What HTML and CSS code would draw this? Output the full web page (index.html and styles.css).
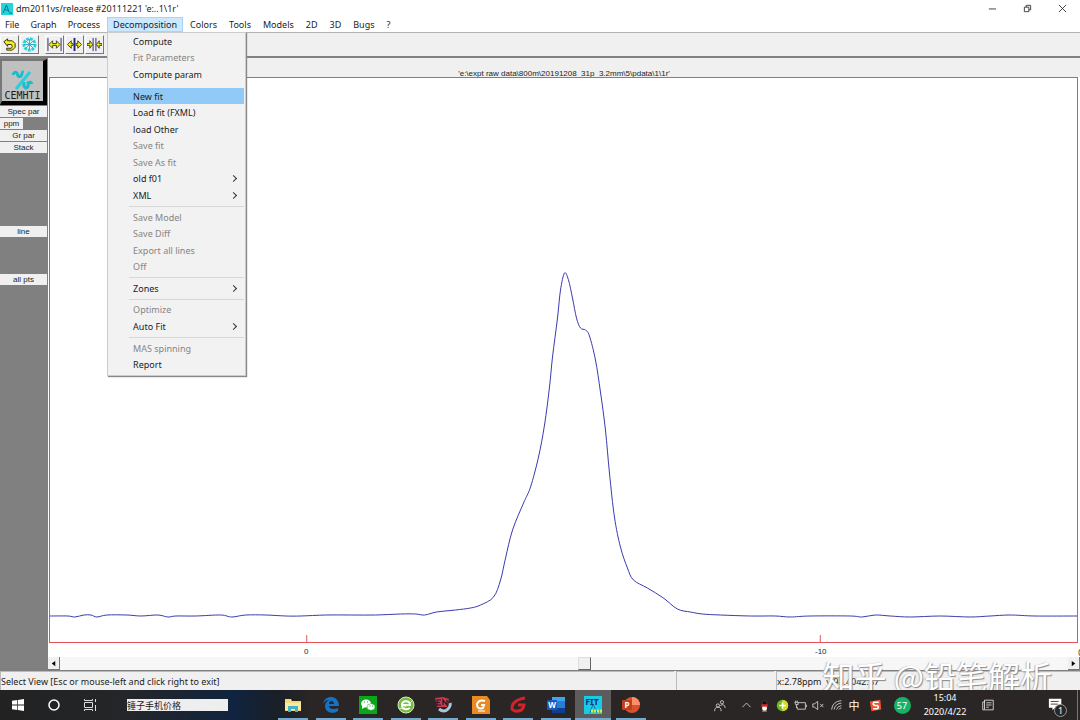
FILE: index.html
```html
<!DOCTYPE html>
<html lang="en">
<head>
    <meta charset="UTF-8">
    <meta name="viewport" content="width=device-width, initial-scale=1.0">
    <title>dm2011vs/release</title>
    <link rel="stylesheet" href="styles.css">
</head>
<body>

    <header class="titlebar">
        <svg class="app-icon" viewBox="0 0 12 12"><rect width="12" height="12" fill="#25d3dc"/><path d="M2 10L5.500 2L8 9M4 7h3M8 10h3" stroke="#126f83" fill="none"/></svg>
        <h1>dm2011vs/release #20111221 'e:..1\1r'</h1>
        <div class="window-buttons">
            <button aria-label="Minimize"><svg viewBox="0 0 10 10"><path d="M1 5.500h8"/></svg></button>
            <button aria-label="Restore"><svg viewBox="0 0 10 10"><path d="M1.500 3.500h5v5h-5zM3.500 3.500v-2h5v5h-2"/></svg></button>
            <button aria-label="Close"><svg viewBox="0 0 10 10"><path d="M1 1l8 8M9 1L1 9"/></svg></button>
        </div>
    </header>

    <nav class="menubar">
        <button>File</button>
        <button>Graph</button>
        <button>Process</button>
        <div class="menu-holder">
            <button class="open">Decomposition</button>
            <div class="menu">
                <button>Compute</button>
                <button disabled>Fit Parameters</button>
                <button>Compute param</button>
                <hr class="blank">
                <button class="selected">New fit</button>
                <button>Load fit (FXML)</button>
                <button>load Other</button>
                <button disabled>Save fit</button>
                <button disabled>Save As fit</button>
                <button class="sub">old f01</button>
                <button class="sub">XML</button>
                <hr>
                <button disabled>Save Model</button>
                <button disabled>Save Diff</button>
                <button disabled>Export all lines</button>
                <button disabled>Off</button>
                <hr>
                <button class="sub">Zones</button>
                <hr>
                <button disabled>Optimize</button>
                <button class="sub">Auto Fit</button>
                <hr>
                <button disabled>MAS spinning</button>
                <button>Report</button>
            </div>
        </div>
        <button>Colors</button>
        <button>Tools</button>
        <button>Models</button>
        <button>2D</button>
        <button>3D</button>
        <button>Bugs</button>
        <button>?</button>
    </nav>

    <div class="toolbar">
        <button aria-label="Undo"><svg viewBox="0 0 16 16"><path d="M2 5l4-3v2h5l3 3v4l-3 3H5v-2h5l1-2-1-2H6v2z" fill="#f2ee20" stroke="#332f00"/></svg></button>
        <button aria-label="Refresh"><svg viewBox="0 0 16 16"><circle cx="8" cy="8" r="6" fill="none" stroke="#27cfe0" stroke-width="3" stroke-dasharray="3 1"/><path d="M8 2v12M2 8h12M4 4l8 8M12 4l-8 8" stroke="#1fb4cc"/></svg></button>
        <span class="space"></span>
        <button aria-label="Full width"><svg viewBox="0 0 16 16"><path d="M1 1v14M15 1v14" stroke="#22227a"/><path d="M2 8l4-4v3h4V4l4 4-4 4V9H6v3z" fill="#f2ee20" stroke="#44420a"/></svg></button>
        <button aria-label="Expand"><svg viewBox="0 0 16 16"><path d="M0.500 8l4-4v3h2v2h-2v3zM15.500 8l-4-4v3h-2v2h2v3z" fill="#f2ee20" stroke="#44420a"/><path d="M8 1v14" stroke="#22227a" stroke-width="2"/></svg></button>
        <button aria-label="Shrink"><svg viewBox="0 0 16 16"><path d="M6 8l-3-4v3H0v2h3v3zM10 8l3-4v3h3v2h-3v3z" fill="#f2ee20" stroke="#44420a"/><path d="M6.500 1v14M9.500 1v14" stroke="#22227a"/></svg></button>
    </div>

    <main class="work">
        <aside class="sidebar">
            <button class="logo">
                <svg viewBox="0 0 24 20"><path d="M2 5q1-4 4-2q1 5 4 3q2-4 1-5M13 12q-1 5 2 6q3-1 2-5q3-2 4 1" fill="none" stroke="#1bbccb" stroke-width="3"/><path d="M19 2L5 19" stroke="#25cfdc" stroke-width="3"/></svg>
                <span>CEMHTI</span>
            </button>
            <button>Spec par</button>
            <button class="unit">ppm</button>
            <button>Gr par</button>
            <button>Stack</button>
            <button class="line">line</button>
            <button class="points">all pts</button>
        </aside>

        <section class="plot">
            <h2>'e:\expt raw data\800m\20191208_31p_3.2mm\5\pdata\1\1r'</h2>
            <div class="frame">
                <svg viewBox="49 78 1028 564" preserveAspectRatio="none">
                    <path class="tick" d="M306 635v8M820 635v8"/>
                    <path class="curve" id="curve"/>
                </svg>
            </div>
            <div class="axis"><span>0</span><span>-10</span><span>(</span></div>
            <div class="scroller">
                <button aria-label="Scroll left"><svg viewBox="0 0 8 8"><path d="M6 1v6L2 4z"/></svg></button>
                <input type="range" min="0" max="1000" value="521" aria-label="Scroll">
                <button aria-label="Scroll right"><svg viewBox="0 0 8 8"><path d="M2 1v6l4-3z"/></svg></button>
            </div>
        </section>
    </main>

    <footer class="status">
        <span class="message">Select View [Esc or mouse-left and click right to exit]</span>
        <span class="empty"></span>
        <span class="coords">x:2.78ppm &nbsp;y:98.4042.37</span>
        <div class="watermark">知乎 @铅笔解析</div>
    </footer>

    <div class="taskbar">
        <button class="sys" aria-label="Start"><svg viewBox="0 0 16 16"><path d="M2 3.700L7.300 3v4.600H2zM8 2.900L14 2v5.600H8zM2 8.400h5.300V13L2 12.300zM8 8.400h6V14l-6-.9z" fill="#fff"/></svg></button>
        <button class="sys" aria-label="Cortana"><svg viewBox="0 0 16 16"><circle cx="8" cy="8" r="5" fill="none" stroke="#fff" stroke-width="1.500"/></svg></button>
        <button class="sys" aria-label="Task view"><svg viewBox="0 0 16 16"><path d="M2.500 5.500h8v5h-8zM2.500 2v1.500h8V2M2.500 14v-1.500h8V14M13.500 2v3M13.500 8v6" fill="none" stroke="#ddd"/></svg></button>
        <input class="search" type="text" value="锤子手机价格" aria-label="Search">
        <div class="apps">
            <button aria-label="Explorer"><svg viewBox="0 0 18 18"><path d="M1 3h6l1 2h9v10H1z" fill="#f6d77a"/><path d="M1 7h16v7H1z" fill="#fbe9a5"/><path d="M4 16v-6h10v6h-3v-3H7v3z" fill="#45b3c4"/></svg></button>
            <button aria-label="Edge"><svg viewBox="0 0 18 18"><path d="M1 8C2 3 5 1 9 1c5 0 8 4 8 9H7c0 3 5 4 9 2v3c-6 4-13 1-13-5 0-3 2-5 4-6-3 0-5 2-6 4zM7 8h5c0-4-5-4-5 0z" fill="#1673c4"/></svg></button>
            <button aria-label="WeChat"><svg viewBox="0 0 18 18"><rect width="18" height="18" fill="#09a619"/><ellipse cx="7" cy="7.500" rx="5" ry="4" fill="#fff"/><path d="M3 10v3l3-2z" fill="#fff"/><ellipse cx="12" cy="11" rx="4" ry="3.300" fill="#fff" stroke="#09a619" stroke-width=".5"/><path d="M5 6h1M8 6h1M10.500 10h1M13 10h1" stroke="#09a619"/></svg></button>
            <button aria-label="360 Browser"><svg viewBox="0 0 18 18"><circle cx="9" cy="9" r="8" fill="#76bb43" stroke="#d6edbb"/><path d="M4 9h9c0-5-8-5-8 0 0 5 5 5 8 3" fill="none" stroke="#fff" stroke-width="2"/><path d="M2 13Q9 12 16 4" stroke="#d9efb9" fill="none"/></svg></button>
            <button aria-label="EndNote"><svg viewBox="0 0 18 18"><path d="M5 13q5 4 9 0 3-3 2-6" fill="none" stroke="#a9c7dc" stroke-width="3"/><path d="M1 2l8-1 6 2-2 8H3z" fill="#d0354a"/><path d="M7 4H3v5h4M3 6.500h3M9 9V4l4 5V4" stroke="#191b28" fill="none" stroke-width="1.200"/></svg></button>
            <button aria-label="Foxit"><svg viewBox="0 0 18 18"><path d="M0 0h15l3 4v14H0z" fill="#e98a24"/><path d="M13 5Q7 3 5 8q0 6 6 4l1-3H9" fill="none" stroke="#fff" stroke-width="2"/><path d="M6 15h7" stroke="#fbe0bd" stroke-width="1.500"/></svg></button>
            <button aria-label="Origin"><svg viewBox="0 0 18 18"><path d="M16 2Q8 3 4 8q-3 6 2 7 8 1 9-6H9" fill="none" stroke="#d0242d" stroke-width="3"/></svg></button>
            <button aria-label="Word"><svg viewBox="0 0 18 18"><rect x="5" y="1" width="13" height="16" rx="1" fill="#2b7cd3"/><path d="M5 1h13v4H5z" fill="#41a5ee"/><path d="M5 12h13v5H5z" fill="#103f91"/><rect y="4" width="10" height="10" rx="1" fill="#185abd"/><text x="5" y="12" text-anchor="middle">W</text></svg></button>
            <button class="active" aria-label="DMFit"><svg viewBox="0 0 18 18"><rect width="18" height="18" fill="#16cbe3"/><path d="M6 17l3-9 4 9" stroke="#117a91" fill="none"/><path d="M7 15h11" stroke="#dfe849" stroke-width="3" stroke-dasharray="2 1"/><text class="fit" x="8" y="9" text-anchor="middle">FIT</text></svg></button>
            <button aria-label="PowerPoint"><svg viewBox="0 0 18 18"><circle cx="10" cy="9" r="8" fill="#d35230"/><path d="M10 1a8 8 0 0 1 8 8h-8z" fill="#ff8f6b"/><rect y="4" width="10" height="10" rx="1" fill="#c43e1c"/><text x="5" y="12" text-anchor="middle">P</text></svg></button>
        </div>
        <div class="tray">
            <button class="people" aria-label="People"><svg viewBox="0 0 16 16"><path d="M2 15q0-5 4-5t4 5M4 8a2 2 0 1 0 4 0a2 2 0 1 0-4 0M9 4a2 2 0 1 0 4 0a2 2 0 1 0-4 0M9 8q5-3 6 3"/></svg></button>
            <button aria-label="Show hidden icons"><svg viewBox="0 0 16 16"><path d="M3 10l5-5 5 5"/></svg></button>
            <button aria-label="QQ"><svg viewBox="0 0 16 16"><circle cx="8" cy="5" r="3" fill="#111" stroke="#444"/><ellipse cx="8" cy="11" rx="3" ry="3.500" fill="#fff" stroke="none"/><path d="M4 8h8" stroke="#e02323" stroke-width="3"/><path d="M5 15h6" stroke="#e8a428"/></svg></button>
            <button aria-label="360"><svg viewBox="0 0 16 16"><circle cx="8" cy="8" r="7" fill="#6dbb19" stroke="none"/><path d="M8 1a7 7 0 0 1 0 14" fill="#d9da28" stroke="none"/><path d="M8 4v8M4 8h8" stroke="#fff" stroke-width="2"/></svg></button>
            <button aria-label="Battery"><svg viewBox="0 0 16 16"><path d="M5 4.500h9v8H4v-3M15.500 7v3M1 4h4v3H2zM2 4V2M4 4V2M3 7v4"/></svg></button>
            <button aria-label="Volume"><svg viewBox="0 0 16 16"><path d="M1 6h2l4-3v10l-4-3H1zM10 6l4 4M14 6l-4 4"/></svg></button>
            <button aria-label="Network"><svg viewBox="0 0 16 16"><path d="M2 13Q3 3 14 2M5 13Q6 6 14 5M8 13Q9 9 14 8M11 13q1-2 3-2"/></svg></button>
            <button class="lang">中</button>
            <button class="sogou" aria-label="Sogou"><svg viewBox="0 0 16 16"><path d="M1 3l13-2 1 12-12 2z" fill="#ee542e" stroke="none"/><path d="M12 4H6q-2 3 1 4h3q3 2 0 4H5" stroke="#fff" stroke-width="2"/></svg></button>
            <button class="score"><span>57</span></button>
            <button class="clock"><span>15:04</span><span>2020/4/22</span></button>
            <button class="note" aria-label="Notes"><svg viewBox="0 0 16 16"><path d="M4 2.500h10v11H2v-9h2zM4 3v10M6 5.500h6M6 8h6M6 10.500h3"/></svg></button>
            <button class="notify" aria-label="Notifications"><svg viewBox="0 0 18 18"><path d="M1 2h14v10H8l-3 3v-3H1z" fill="#fff" stroke="none"/><path d="M3 5h9M3 8h8" stroke="#333"/></svg><span class="badge">1</span></button>
        </div>
    </div>

    <script src="script.js"></script>
</body>
</html>
```
FILE: styles.css
```css
* {
    box-sizing: border-box;
}

body {
    margin: 0;
    height: 100vh;
    display: flex;
    flex-direction: column;
    overflow: hidden;
    background: #fff;
    color: #1c1c1c;
    font-family: "Noto Sans", "Noto Sans CJK SC", sans-serif;
    font-size: 9px;
}

button {
    margin: 0;
    padding: 0;
    border: 0;
    background: none;
    color: inherit;
    font: inherit;
    white-space: nowrap;
}

svg {
    display: block;
}

/* title bar */
.titlebar {
    flex: none;
    height: 17px;
    display: flex;
    align-items: center;
    gap: 3px;
    padding-left: 1px;
}

.app-icon {
    width: 12px;
    height: 12px;
}

.titlebar h1 {
    margin: 0;
    flex: 1;
    font-size: 9px;
    font-weight: normal;
}

.window-buttons {
    display: flex;
}

.window-buttons button {
    width: 35px;
    display: flex;
    justify-content: center;
}

.window-buttons svg {
    width: 9px;
    height: 9px;
    fill: none;
    stroke: #333;
}

/* menus */
.menubar {
    flex: none;
    height: 15px;
    display: flex;
    gap: 1px;
}

.menubar > button,
.menu-holder > button {
    height: 15px;
    padding: 0 5px;
}

.menu-holder {
    position: relative;
}

.menu-holder,
.menu-holder ~ button {
    margin-left: 1px;
}

.menu-holder .open {
    min-width: 76px;
    background: #cce8ff;
    border: 1px solid #a8d5f7;
    padding: 0 4px;
}

.menu {
    position: absolute;
    z-index: 5;
    top: 15px;
    left: 0;
    width: 139px;
    height: 344px;
    display: flex;
    flex-direction: column;
    padding: 0 1px 2px;
    background: #f2f2f2;
    border: 1px solid #ccc;
    box-shadow: 1px 1px 1px #888;
}

.menu button {
    flex: 1;
    display: flex;
    align-items: center;
    padding: 0 8px 0 24px;
    text-align: left;
}

.menu button:disabled {
    color: #858585;
}

.menu .selected {
    background: #91c9f7;
}

.menu .sub::after {
    content: "";
    width: 4px;
    height: 4px;
    margin-left: auto;
    border-top: 1px solid #333;
    border-right: 1px solid #333;
    transform: rotate(45deg);
}

.menu hr {
    flex: none;
    height: 1px;
    margin: 2px 0 2px 20px;
    border: 0;
    background: #d7d7d7;
}

.menu .blank {
    background: none;
}

/* toolbar */
.toolbar {
    flex: none;
    height: 26px;
    display: flex;
    align-items: center;
    gap: 1px;
    background: #f0f0f0;
    border-top: 1px solid #b4b4b4;
    border-bottom: 2px solid #808080;
}

.toolbar button {
    width: 19px;
    height: 19px;
    padding: 1px;
    border: 1px solid #fff;
    border-right-color: #777;
    border-bottom-color: #777;
}

.toolbar .space {
    width: 4px;
}

/* work area */
.work {
    flex: 1;
    min-height: 0;
    display: flex;
}

.sidebar {
    width: 48px;
    display: flex;
    flex-direction: column;
    align-items: flex-start;
    gap: 1px;
    padding: 1px 1px 0 0;
    background: #808080;
    font-family: "Liberation Sans", Arial, sans-serif;
    font-size: 8px;
}

.sidebar button {
    width: 100%;
    height: 11px;
    line-height: 11px;
    background: #f0f0f0;
}

.sidebar .logo {
    height: 46px;
    display: flex;
    flex-direction: column;
    align-items: center;
    justify-content: flex-end;
    background: #c0c0c0;
    border: 2px solid #000;
    border-width: 2px 4px 4px 2px;
    border-color: #777 #000 #000 #777;
    font-family: "DejaVu Sans Mono", monospace;
    font-size: 10px;
}

.logo svg {
    width: 24px;
    height: 20px;
}

.sidebar .unit {
    width: 23px;
}

.sidebar .line {
    margin-top: 72px;
}

.sidebar .points {
    margin-top: 36px;
}

.plot {
    flex: 1;
    min-width: 0;
    display: flex;
    flex-direction: column;
    font-family: "Liberation Sans", Arial, sans-serif;
    font-size: 8px;
}

.plot h2 {
    margin: 0;
    height: 19px;
    padding-top: 10px;
    overflow: hidden;
    background: #f0f0f0;
    font-size: 8px;
    font-weight: normal;
    line-height: 12px;
    text-align: center;
}

.frame {
    flex: 1;
    min-height: 0;
    margin: 0 2px 0 1px;
    border: 1px solid #e8505b;
}

.frame svg {
    width: 100%;
    height: 100%;
}

.frame path {
    fill: none;
    vector-effect: non-scaling-stroke;
}

.frame .tick {
    stroke: #e8505b;
}

.frame .curve {
    stroke: #3b3bb0;
}

.axis {
    height: 14px;
    margin: 0 2px 0 1px;
    display: grid;
    grid-template-columns: 1fr 1fr 0;
    align-items: end;
    line-height: 11px;
    text-align: center;
}

.scroller {
    height: 13px;
    display: flex;
    background: #f7f7f7;
}

.scroller button {
    width: 12px;
    padding: 2px;
    background: #f0f0f0;
    border-right: 1px solid #777;
    border-bottom: 1px solid #777;
}

.scroller input {
    flex: 1;
    min-width: 0;
    margin: 0;
    appearance: none;
    background: none;
}

.scroller input::-webkit-slider-thumb {
    appearance: none;
    width: 13px;
    height: 13px;
    background: #f0f0f0;
    border: 1px solid #ddd;
    border-right-color: #666;
    border-bottom-color: #666;
}

/* status bar */
.status {
    position: relative;
    flex: none;
    height: 20px;
    display: flex;
    align-items: stretch;
    gap: 2px;
    line-height: 19px;
    background: #f0f0f0;
    border-top: 1px solid #808080;
}

.status span {
    border-top: 1px solid #bbb;
    border-left: 1px solid #bbb;
}

.message {
    flex: 1;
}

.empty {
    width: 98px;
}

.coords {
    width: 304px;
}

.watermark {
    position: absolute;
    right: 28px;
    bottom: 0;
    color: #fff;
    font-family: "Noto Sans CJK SC", sans-serif;
    font-size: 32px;
    line-height: 30px;
    white-space: nowrap;
    text-shadow: 1px 1px 1px #888, -1px 0 1px #bbb;
}

/* taskbar */
.taskbar {
    position: relative;
    flex: none;
    height: 30px;
    display: flex;
    align-items: stretch;
    background: linear-gradient(90deg, #222 0, #242629 130px, #10233f 235px, #191f28 275px, #292625 310px);
    color: #fff;
}

.taskbar button {
    display: flex;
    align-items: center;
    justify-content: center;
}

.sys {
    width: 36px;
}

.sys svg {
    width: 16px;
    height: 16px;
}

.search {
    align-self: center;
    width: 101px;
    height: 12px;
    margin-left: 19px;
    padding: 0;
    border: 0;
    border-radius: 0;
    background: #eee;
    color: #222;
    font-family: "Noto Sans CJK SC", sans-serif;
    font-size: 9px;
}

.apps {
    display: flex;
    gap: 1px;
    margin-left: 47px;
}

.apps button {
    width: 36px;
    background: linear-gradient(#76a9d0, #76a9d0) center bottom / 30px 2px no-repeat;
}

.apps button:nth-child(even) {
    width: 37px;
}

.apps .active {
    background-color: #5c5c5c;
    background-size: 100% 2px;
}

.apps svg {
    width: 18px;
    height: 18px;
}

.apps text {
    fill: #fff;
    font-size: 8px;
    font-weight: bold;
}

.apps .fit {
    fill: #132c8c;
    font-size: 9px;
}

.tray {
    margin-left: auto;
    display: flex;
}

.tray button {
    width: 18px;
}

.tray svg {
    width: 13px;
    height: 13px;
    fill: none;
    stroke: #e0e0e0;
}

.tray .people {
    width: 36px;
}

.tray .lang {
    font-size: 11px;
}

.tray .sogou {
    width: 25px;
}

.tray .score {
    width: 28px;
}

.score span {
    width: 17px;
    height: 17px;
    line-height: 17px;
    border-radius: 50%;
    background: #17b26a;
}

.tray .clock {
    width: 58px;
    flex-direction: column;
    line-height: 14px;
}

.tray .note {
    width: 28px;
}

.tray .note svg {
    width: 14px;
    height: 14px;
}

.tray .notify {
    position: relative;
    width: 76px;
    padding-left: 32px;
    border-right: 1px solid #777;
    margin-right: 2px;
}

.tray .notify svg {
    width: 16px;
    height: 16px;
}

.badge {
    position: absolute;
    right: 10px;
    bottom: 3px;
    width: 13px;
    height: 13px;
    line-height: 11px;
    border: 1px solid #999;
    border-radius: 50%;
    background: #292625;
}
```
FILE: script.js
```js
const points = [
    [49, 616], [67, 616], [74, 617], [83, 615], [90, 615], [96, 617], [106, 615], [126, 615],
    [140, 616], [157, 615], [167, 617], [175, 616], [195, 616], [220, 615], [231, 617], [245, 615],
    [265, 615], [285, 616], [300, 616], [325, 615], [350, 615], [375, 615], [400, 614], [415, 614],
    [424, 615], [436, 612], [455, 610], [470, 608], [480, 605], [493, 597], [500, 580], [505, 558],
    [512, 530], [523, 503], [530, 487], [538, 457], [544, 425], [549, 387], [552, 357], [557, 318],
    [560, 290], [564, 273], [568, 280], [572, 298], [576, 318], [580, 328], [585, 330], [589, 336],
    [595, 360], [600, 392], [605, 430], [609, 473], [614, 517], [620, 547], [627, 568], [633, 580],
    [647, 588], [663, 598], [677, 609], [690, 612], [702, 614], [720, 615], [750, 616], [775, 616],
    [790, 617], [810, 616], [850, 616], [862, 617], [875, 615], [890, 616], [910, 617], [940, 616],
    [970, 617], [990, 616], [1010, 615], [1035, 616], [1077, 616]
];

// smooth line through all the points
let d = `M${points[0]}`;
for (let i = 0; i < points.length - 1; i++) {
    const p0 = points[i - 1] || points[i];
    const p1 = points[i];
    const p2 = points[i + 1];
    const p3 = points[i + 2] || p2;
    d += `C${p1[0] + (p2[0] - p0[0]) / 6},${p1[1] + (p2[1] - p0[1]) / 6}`;
    d += ` ${p2[0] - (p3[0] - p1[0]) / 6},${p2[1] - (p3[1] - p1[1]) / 6} ${p2}`;
}
document.getElementById('curve').setAttribute('d', d);
```
